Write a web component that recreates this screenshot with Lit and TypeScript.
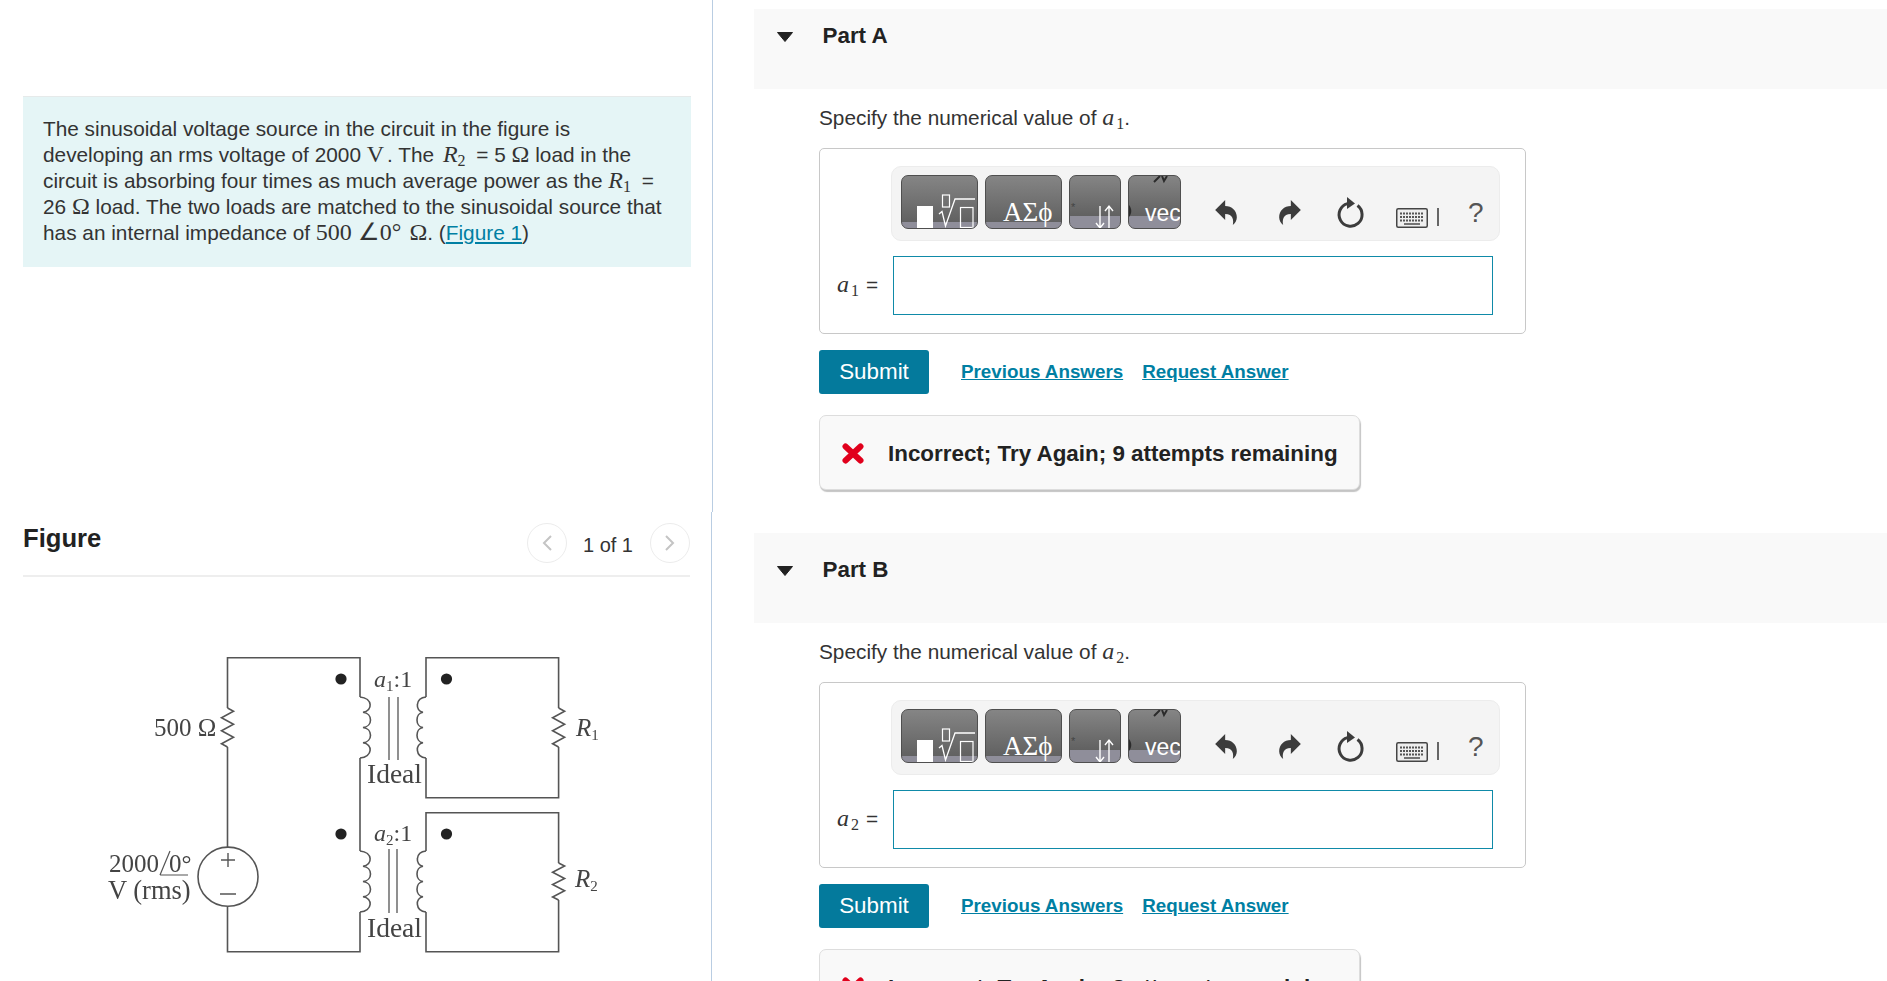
import { LitElement, html, css } from "lit";
import { customElement } from "lit/decorators.js";

const coilR = (x: number, y: number, h: number) => {
  const s = h / 4;
  let d = `M${x} ${y}`;
  for (let i = 0; i < 4; i++) d += ` C${x + 13} ${y + i * s + 1} ${x + 13} ${y + (i + 1) * s - 1} ${x + (i == 3 ? 0 : 3)} ${y + (i + 1) * s}`;
  return d;
};
const coilL = (x: number, y: number, h: number) => {
  const s = h / 4;
  let d = `M${x} ${y}`;
  for (let i = 0; i < 4; i++) d += ` C${x - 11} ${y + i * s + 1} ${x - 11} ${y + (i + 1) * s - 1} ${x - (i == 3 ? 0 : 3)} ${y + (i + 1) * s}`;
  return d;
};
const zig = (x: number, y: number, h: number) => {
  const s = h / 6;
  let d = `M${x} ${y} L${x + 6} ${y + s * 0.5}`;
  for (let i = 0; i < 5; i++) d += ` L${x + (i % 2 ? 6 : -6)} ${y + s * (i + 1.5)}`;
  d += ` L${x} ${y + h}`;
  return d;
};

@customElement("app-root")
export class AppRoot extends LitElement {
  static styles = css`
    :host { display: block; width: 1887px; height: 981px; overflow: hidden; background: #fff; font-family: "Liberation Sans", Arial, sans-serif; color: #333; font-size: 20.8px; line-height: 26px; }
    .page { display: flex; height: 981px; }
    .left { width: 713px; flex: none; }
    .upper { height: 512px; box-sizing: border-box; padding: 96px 0 0 23px; border-right: 1px solid #b9cde2; }
    .info { width: 668px; height: 171px; box-sizing: border-box; background: #e5f5f6; border-top: 1px solid #e6eaea; padding: 19px 0 0 20px; white-space: nowrap; }
    .m { font-family: "Liberation Serif", serif; font-size: 24px; line-height: 0; }
    .mi { font-family: "Liberation Serif", serif; font-style: italic; font-size: 24px; line-height: 0; }
    .sub { font-family: "Liberation Serif", serif; font-size: 16px; line-height: 0; vertical-align: -4px; }
    .wa { letter-spacing: 2px; }
    .wv { letter-spacing: 3px; }
    .wr { margin-left: 3px; }
    .gap { margin-right: 5px; }
    .om { margin-left: 2px; }
    a { color: #007fa3; }
    .lower { width: 712px; height: 469px; box-sizing: border-box; border-right: 1px solid #b9cde2; }
    .fighead { display: flex; align-items: flex-start; margin-left: 23px; width: 667px; height: 65px; box-sizing: border-box; border-bottom: 2px solid #eee; }
    .fighead h2 { margin: 11px auto 0 0; font-size: 25.6px; line-height: 30px; font-weight: 700; color: #222; }
    .circ { width: 40px; height: 40px; margin-top: 11px; box-sizing: border-box; border: 1px solid #ececec; border-radius: 50%; display: flex; align-items: center; justify-content: center; }
    .count { margin: 20px 17px 0 16px; color: #333; font-size: 20px; }
    .figure { display: block; margin: 63px 0 0 80px; filter: blur(0.45px); }
    .figure text { font-family: "Liberation Serif", serif; fill: #444; }
    .right { flex: 1; padding-left: 41px; min-width: 0; }
    .ph { display: flex; align-items: center; background: #f9f9f9; padding-left: 23px; box-sizing: border-box; font-weight: 700; font-size: 22.4px; color: #222; }
    .ph.a { height: 80px; margin-top: 9px; padding-bottom: 26px; }
    .ph.b { height: 90px; padding-bottom: 16px; }
    .ph svg { margin: 1px 29.5px 0 0; }
    .pb { padding-left: 65px; padding-bottom: 43px; }
    .q { margin: 16px 0 17px; }
    .box { width: 707px; height: 186px; box-sizing: border-box; border: 1px solid #c8c8c8; border-radius: 5px; padding: 17px 0 0 17px; }
    .tb { margin-left: 54px; width: 609px; height: 75px; box-sizing: border-box; background: #f4f4f4; border: 1px solid #ececec; border-radius: 10px; padding: 8px 0 0 9px; display: flex; align-items: flex-start; position: relative; }
    .btn { height: 54px; box-sizing: border-box; border: 1px solid #4f4f4f; border-radius: 7px; background: linear-gradient(#858585 0, #616161 46px, #8f8e9a 46px); margin-right: 7px; overflow: hidden; flex: none; }
    .btn svg { display: block; }
    .btn.tall { background: linear-gradient(#858585 0, #616161 40px, #8f8e9a 40px); }
    .sym { font-family: "Liberation Serif", serif; font-size: 27px; fill: #fff; }
    .vec { font-family: "Liberation Sans", sans-serif; font-size: 23px; fill: #fff; }
    .tool { flex: none; display: block; }
    .t1 { margin: 25px 0 0 27px; }
    .t2 { margin: 25px 0 0 42px; }
    .t3 { margin: 21px 0 0 33px; }
    .t4 { margin: 33px 0 0 30px; }
    .t5 { margin: 33px 0 0 9px; width: 2px; height: 18px; background: #666; }
    .help { margin: 22px 0 0 29px; font-size: 28px; line-height: 32px; color: #555; }
    .ans { display: flex; align-items: center; margin-top: 15px; }
    .lab { width: 56px; flex: none; font-size: 18px; white-space: nowrap; color: #333; }
    .lab .sub { font-size: 16px; }
    .lab .eq { margin-left: 7px; font-size: 20.8px; }
    .inp { width: 600px; height: 59px; box-sizing: border-box; border: 1px solid #0f8aa8; background: #fff; }
    .acts { display: flex; align-items: center; margin-top: 16px; }
    .submit { width: 110px; height: 44px; background: #047a9c; color: #fff; border-radius: 3px; display: flex; align-items: center; justify-content: center; font-size: 22.4px; margin-right: 32px; }
    .acts a { font-weight: 700; font-size: 18.8px; margin-right: 19px; }
    .fb { display: flex; align-items: center; width: 541px; height: 75px; box-sizing: border-box; margin-top: 21px; background: #f9f9f9; border: 1px solid #ddd; border-radius: 7px; box-shadow: 1px 2px 1px #c4c4c4; padding: 2px 0 0 22px; font-weight: 700; font-size: 22.4px; color: #222; white-space: nowrap; }
    .fb svg { margin-right: 24px; flex: none; }
  `;

  private tri() {
    return html`<svg width="16" height="10" viewBox="0 0 16 10"><path d="M0.5 0.5H15.5L8 9.5Z" fill="#222" stroke="#222" stroke-linejoin="round"/></svg>`;
  }

  private toolbar() {
    return html`<div class="tb">
      <div class="btn" style="width:77px"><svg width="75" height="52" viewBox="0 0 75 52">
        <rect x="15" y="30" width="16" height="22" fill="#fff"/>
        <rect x="40.5" y="19" width="7" height="12" fill="none" stroke="#fff" stroke-width="1.2"/>
        <path d="M37 38 L40 35.5 L43.5 50 L53 23 H73" fill="none" stroke="#fff" stroke-width="1.3"/>
        <rect x="58.5" y="31.5" width="12.5" height="20" fill="none" stroke="#fff" stroke-width="1.2"/>
      </svg></div>
      <div class="btn" style="width:77px"><svg width="75" height="52" viewBox="0 0 75 52">
        <text class="sym" x="17" y="45">ΑΣϕ</text>
      </svg></div>
      <div class="btn tall" style="width:52px"><svg width="50" height="52" viewBox="0 0 50 52">
        <text x="1" y="35" font-size="11" fill="#444" font-family="Liberation Sans">*</text>
        <path d="M30 30V52M26 47L30 52L34 47M39 52V30M35 35L39 30L43 35" fill="none" stroke="#fff" stroke-width="1.4"/>
      </svg></div>
      <div class="btn tall" style="width:53px"><svg width="51" height="52" viewBox="0 0 51 52">
        <path d="M0 29C3 33 3 37 0 41Z" fill="#2b2b2b"/>
        <path d="M25 6L31 0M33 0L35 5L38 0" fill="none" stroke="#2b2b2b" stroke-width="2"/>
        <text class="vec" x="16" y="45">vec</text>
      </svg></div>
      <svg class="tool t1" width="22" height="25" viewBox="0 0 65 75"><path d="M0 30L30 0V18C50 18 65 32 65 52C65 62 60 70 53 75C56 62 54 42 30 42V60Z" fill="#3c3c3c"/></svg>
      <svg class="tool t2" width="22" height="25" viewBox="0 0 65 75"><path d="M65 30L35 0V18C15 18 0 32 0 52C0 62 5 70 12 75C9 62 11 42 35 42V60Z" fill="#3c3c3c"/></svg>
      <svg class="tool t3" width="32" height="34" viewBox="0 0 32 34">
        <path d="M13.5 7.6A11.5 11.5 0 1 0 23.5 9.5" fill="none" stroke="#3c3c3c" stroke-width="3"/>
        <path d="M13 1L21 7.5L13 13Z" fill="#3c3c3c"/>
      </svg>
      <svg class="tool t4" width="32" height="20" viewBox="0 0 32 20">
        <rect x="0.75" y="0.75" width="30.5" height="18.5" rx="1.5" fill="#eee" stroke="#444" stroke-width="1.5"/>
        <path d="M4 5.5H28M4 9H28M4 12.5H28" stroke="#555" stroke-width="1.8" stroke-dasharray="2 1"/>
        <path d="M8 16H24" stroke="#555" stroke-width="1.6"/>
      </svg>
      <div class="tool t5"></div>
      <div class="tool help">?</div>
    </div>`;
  }

  private part(letter: string, cls: string, n: string, attempts: string) {
    return html`
      <div class="ph ${cls}">${this.tri()}<span>Part ${letter}</span></div>
      <div class="pb">
        <div class="q">Specify the numerical value of <span class="mi wa">a</span><span class="sub">${n}</span>.</div>
        <div class="box">
          ${this.toolbar()}
          <div class="ans">
            <div class="lab"><span class="mi wa">a</span><span class="sub">${n}</span><span class="eq">=</span></div>
            <div class="inp"></div>
          </div>
        </div>
        <div class="acts">
          <div class="submit">Submit</div>
          <a href="#">Previous Answers</a>
          <a href="#">Request Answer</a>
        </div>
        <div class="fb">
          <svg width="22" height="21" viewBox="0 0 22 21"><path d="M3.5 3.5L18.5 17.5M18.5 3.5L3.5 17.5" stroke="#e1001c" stroke-width="6" stroke-linecap="round"/></svg>
          Incorrect; Try Again; ${attempts} attempts remaining
        </div>
      </div>`;
  }

  private circuit() {
    const s = "#555";
    return html`<svg class="figure" width="540" height="341" viewBox="80 640 540 341">
      <g fill="none" stroke="${s}" stroke-width="1.6">
        <path d="M227.5 708V657.7H360V697M360 758V851M360 912V951.7H227.5V906.5M227.5 847V747"/>
        <path d="${zig(227.5, 708, 39)}"/>
        <ellipse cx="228" cy="876.7" rx="30" ry="29.6"/>
        <path d="${coilR(360, 697, 61)}"/>
        <path d="${coilR(360, 851, 61)}"/>
        <path d="M426 697V657.7H558.6V708M558.6 747V797.7H426V758"/>
        <path d="M426 851V812.7H558.6V863M558.6 900V951.7H426V912"/>
        <path d="${coilL(426, 697, 61)}"/>
        <path d="${coilL(426, 851, 61)}"/>
        <path d="${zig(558.6, 708, 39)}"/>
        <path d="${zig(558.6, 863, 37)}"/>
        <path d="M389 697V760M398 697V760M389 849V913M397 849V913" stroke-width="1.3"/>
        <path d="M221 860H235M228 853V867M220 894H236" stroke-width="1.4"/>
        <path d="M160 875H188M160 875L170 851" stroke-width="1.2"/>
      </g>
      <g fill="#222">
        <circle cx="341" cy="679" r="5.6"/><circle cx="446.5" cy="679" r="5.6"/>
        <circle cx="341" cy="834" r="5.6"/><circle cx="446.5" cy="834" r="5.6"/>
      </g>
      <text x="154" y="736" font-size="25">500 Ω</text>
      <text x="374" y="687" font-size="24"><tspan font-style="italic">a</tspan><tspan font-size="15" dy="4">1</tspan><tspan dy="-4">:1</tspan></text>
      <text x="374" y="841" font-size="24"><tspan font-style="italic">a</tspan><tspan font-size="15" dy="4">2</tspan><tspan dy="-4">:1</tspan></text>
      <text x="367" y="783" font-size="27.5">Ideal</text>
      <text x="367" y="937" font-size="27.5">Ideal</text>
      <text x="576" y="736" font-size="25" font-style="italic">R<tspan font-size="15" dy="4" font-style="normal">1</tspan></text>
      <text x="575" y="887" font-size="25" font-style="italic">R<tspan font-size="15" dy="4" font-style="normal">2</tspan></text>
      <text x="109" y="872" font-size="25">2000</text>
      <text x="169" y="872" font-size="25">0°</text>
      <text x="108" y="899" font-size="26.5">V (rms)</text>
    </svg>`;
  }

  render() {
    return html`<div class="page">
      <div class="left">
        <div class="upper">
          <div class="info">
            The sinusoidal voltage source in the circuit in the figure is<br>
            developing an rms voltage of 2000 <span class="m wv">V</span>. The <span class="mi wr">R</span><span class="sub gap">2</span> = 5 <span class="m">Ω</span> load in the<br>
            circuit is absorbing four times as much average power as the <span class="mi">R</span><span class="sub gap">1</span> =<br>
            26 <span class="m">Ω</span> load. The two loads are matched to the sinusoidal source that<br>
            has an internal impedance of <span class="m">500 ∠0° <span class="om">Ω</span></span>. (<a href="#">Figure 1</a>)
          </div>
        </div>
        <div class="lower">
          <div class="fighead">
            <h2>Figure</h2>
            <div class="circ"><svg width="14" height="20" viewBox="0 0 14 20"><path d="M11 3L4 10L11 17" fill="none" stroke="#c4c4c4" stroke-width="2"/></svg></div>
            <div class="count">1 of 1</div>
            <div class="circ"><svg width="14" height="20" viewBox="0 0 14 20"><path d="M3 3L10 10L3 17" fill="none" stroke="#c4c4c4" stroke-width="2"/></svg></div>
          </div>
          ${this.circuit()}
        </div>
      </div>
      <div class="right">
        ${this.part("A", "a", "1", "9")}
        ${this.part("B", "b", "2", "8")}
      </div>
    </div>`;
  }
}
